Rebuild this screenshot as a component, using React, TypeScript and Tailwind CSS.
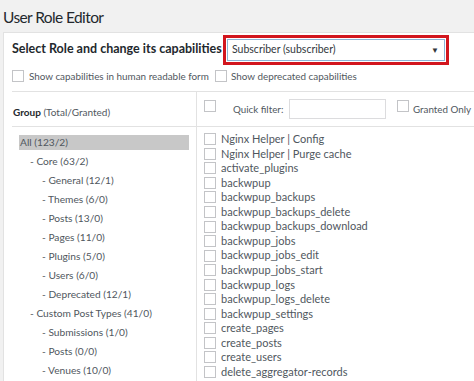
import React from 'react';

const groups: { label: string; indent: number; active?: boolean }[] = [
  { label: 'All (123/2)', indent: 0, active: true },
  { label: '- Core (63/2)', indent: 1 },
  { label: '- General (12/1)', indent: 2 },
  { label: '- Themes (6/0)', indent: 2 },
  { label: '- Posts (13/0)', indent: 2 },
  { label: '- Pages (11/0)', indent: 2 },
  { label: '- Plugins (5/0)', indent: 2 },
  { label: '- Users (6/0)', indent: 2 },
  { label: '- Deprecated (12/1)', indent: 2 },
  { label: '- Custom Post Types (41/0)', indent: 1 },
  { label: '- Submissions (1/0)', indent: 2 },
  { label: '- Posts (0/0)', indent: 2 },
  { label: '- Venues (10/0)', indent: 2 },
];

const caps = [
  'Nginx Helper | Config',
  'Nginx Helper | Purge cache',
  'activate_plugins',
  'backwpup',
  'backwpup_backups',
  'backwpup_backups_delete',
  'backwpup_backups_download',
  'backwpup_jobs',
  'backwpup_jobs_edit',
  'backwpup_jobs_start',
  'backwpup_logs',
  'backwpup_logs_delete',
  'backwpup_settings',
  'create_pages',
  'create_posts',
  'create_users',
  'delete_aggregator-records',
];

function Box({ disabled }: { disabled?: boolean }) {
  return (
    <span
      className={
        'inline-block w-[12px] h-[12px] shrink-0 border ' +
        (disabled ? 'bg-[#d6d6d6] border-[#d0d0d0]' : 'bg-white border-[#c3c4c7]')
      }
    />
  );
}

export default function App() {
  const indentClass = ['pl-[1px]', 'pl-[11px]', 'pl-[23px]'];

  return (
    <div className="w-[474px] h-[381px] overflow-hidden bg-[#f1f1f1] font-['Lato',sans-serif] text-[#50575e]">
      <h1 className="h-[32px] pl-[3px] pt-[6px] text-[15.5px] leading-[22px] tracking-[-0.6px] text-[#23282d] whitespace-nowrap">
        User Role Editor
      </h1>

      <div className="ml-[3px] h-[349px] bg-white border-l border-t border-[#e2e2e2] pl-[8px]">
        {/* role selector */}
        <div className="flex items-center h-[33px]">
          <span className="w-[211px] shrink-0 text-[12.5px] font-bold text-[#23282d] whitespace-nowrap">
            Select Role and change its capabilities
          </span>
          <div className="border-[3px] border-[#d2161e] p-[1px]">
            <div className="w-[218px] h-[22px] border border-[#8cb4d6] flex items-center justify-between pl-[4px] pr-[5px] text-[10.5px] text-[#32373c]">
              <span>Subscriber (subscriber)</span>
              <span className="text-[8px]">▼</span>
            </div>
          </div>
        </div>

        {/* display options */}
        <div className="flex items-start h-[25px] pt-[4px] text-[9.9px] leading-[12px]">
          <label className="w-[203px] flex items-center gap-[5px] shrink-0 whitespace-nowrap">
            <Box />
            Show capabilities in human readable form
          </label>
          <label className="flex items-center gap-[4px] whitespace-nowrap">
            <Box />
            Show deprecated capabilities
          </label>
        </div>

        <div className="border-b border-[#e2e2e2]" />

        <div className="flex h-full">
          {/* groups */}
          <div className="w-[185px] shrink-0 border-r border-[#e2e2e2]">
            <div className="h-[35px] pt-[13px] pl-[1px] text-[10px] border-b border-[#e2e2e2] whitespace-nowrap">
              <b className="text-[#23282d]">Group</b> (Total/Granted)
            </div>
            <ul className="pt-[8px] text-[10.2px]">
              {groups.map(g => (
                <li key={g.label} className="h-[19px] pl-[7px] pr-[7px]">
                  <div
                    className={
                      'h-[15px] leading-[15px] whitespace-nowrap ' +
                      indentClass[g.indent] +
                      (g.active ? ' bg-[#c8c8c8]' : '')
                    }
                  >
                    {g.label}
                  </div>
                </li>
              ))}
            </ul>
          </div>

          {/* capabilities */}
          <div className="flex-1">
            <div className="h-[35px] flex items-start pt-[7px] pl-[7px] text-[9.8px] border-b border-[#e2e2e2] whitespace-nowrap">
              <span className="mt-[1px] flex"><Box /></span>
              <span className="ml-[17px] mt-[3px] w-[56px] shrink-0">Quick filter:</span>
              <span className="w-[97px] h-[20px] shrink-0 border border-[#dcdcde] bg-white" />
              <span className="ml-[11px] mt-[1px] flex"><Box /></span>
              <span className="ml-[4px] mt-[3px]">Granted Only</span>
            </div>
            <ul className="pt-[5px] pl-[7px] text-[11px]">
              {caps.map(c => (
                <li key={c} className="h-[14.55px] flex items-center gap-[5px] whitespace-nowrap">
                  <Box />
                  <span>{c}</span>
                </li>
              ))}
              <li className="h-[14.55px] flex items-center">
                <Box disabled />
              </li>
            </ul>
          </div>
        </div>
      </div>
    </div>
  );
}
